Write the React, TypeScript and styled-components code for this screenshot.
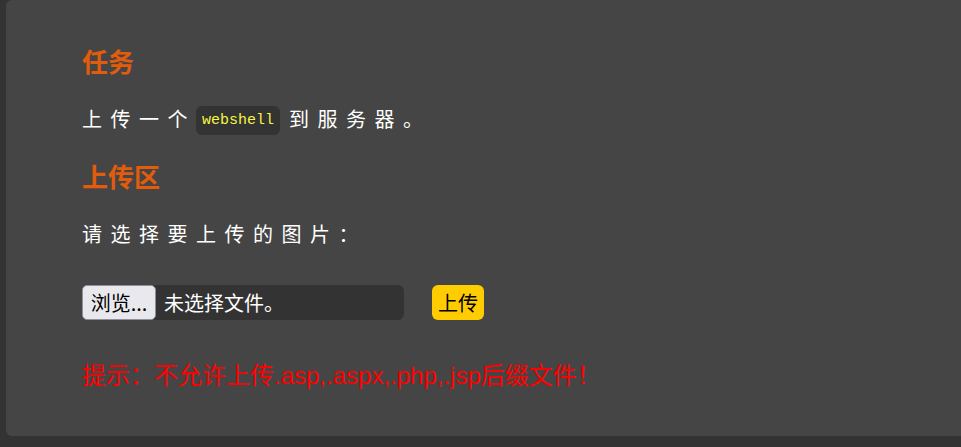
import styled, { createGlobalStyle } from "styled-components";

const GlobalStyle = createGlobalStyle`
  html, body {
    margin: 0;
    padding: 0;
    background: #333333;
    overflow: hidden;
  }
  body {
    font-family: "Noto Sans CJK SC", "Noto Sans", sans-serif;
  }
`;

function App() {
  return (
    <>
      <GlobalStyle />
      <Panel>
        <Heading>任务</Heading>
        <Text>
          上传一个<Code>webshell</Code>到服务器。
        </Text>
        <Heading>上传区</Heading>
        <Text>请选择要上传的图片：</Text>
        <UploadRow>
          <FileBox>
            <BrowseButton>浏览...</BrowseButton>
            <FileName>未选择文件。</FileName>
          </FileBox>
          <SubmitButton>上传</SubmitButton>
        </UploadRow>
        <Hint>提示：不允许上传.asp,.aspx,.php,.jsp后缀文件！</Hint>
      </Panel>
    </>
  );
}
export default App;

const Panel = styled.div`
  box-sizing: border-box;
  margin-left: 6px;
  width: 1000px;
  height: 436px;
  padding: 46px 76px 0;
  background: #454545;
  border-radius: 6px;
  display: flex;
  flex-direction: column;
  align-items: flex-start;
`;
const Heading = styled.h2`
  margin: 0 0 28px;
  font-size: 26px;
  line-height: 30px;
  font-weight: bold;
  color: #e25c0c;
`;
const Text = styled.p`
  margin: 0 0 26px;
  font-size: 20px;
  line-height: 30px;
  letter-spacing: 8.5px;
  color: #ffffff;
`;
const Code = styled.code`
  display: inline-block;
  vertical-align: middle;
  margin: -2px 9px 0 0;
  padding: 0 6px;
  height: 29px;
  line-height: 29px;
  font-family: "Liberation Mono", monospace;
  font-size: 15px;
  font-weight: normal;
  letter-spacing: 0;
  color: #f5f542;
  background: #333333;
  border-radius: 6px;
`;
const UploadRow = styled.div`
  display: flex;
  align-items: center;
  gap: 28px;
  margin-top: 10px;
`;
const FileBox = styled.div`
  display: flex;
  align-items: center;
  width: 322px;
  height: 35px;
  background: #333333;
  border-radius: 6px;
`;
const BrowseButton = styled.span`
  box-sizing: border-box;
  height: 35px;
  width: 74px;
  display: flex;
  align-items: center;
  justify-content: center;
  background: #e9e9ed;
  border: 1px solid #8f8f9d;
  border-radius: 5px;
  color: #000000;
  font-size: 20px;
`;
const FileName = styled.span`
  margin-left: 8px;
  font-size: 20px;
  color: #ffffff;
`;
const SubmitButton = styled.button`
  height: 35px;
  padding: 0 6px;
  border: none;
  border-radius: 6px;
  background: #ffcc00;
  color: #000000;
  font-family: "Noto Sans CJK SC", sans-serif;
  font-size: 20px;
`;
const Hint = styled.p`
  margin: 41px 0 0;
  font-family: "Liberation Sans", "Noto Sans CJK SC", sans-serif;
  font-size: 24px;
  line-height: 30px;
  color: #ff0000;
`;
